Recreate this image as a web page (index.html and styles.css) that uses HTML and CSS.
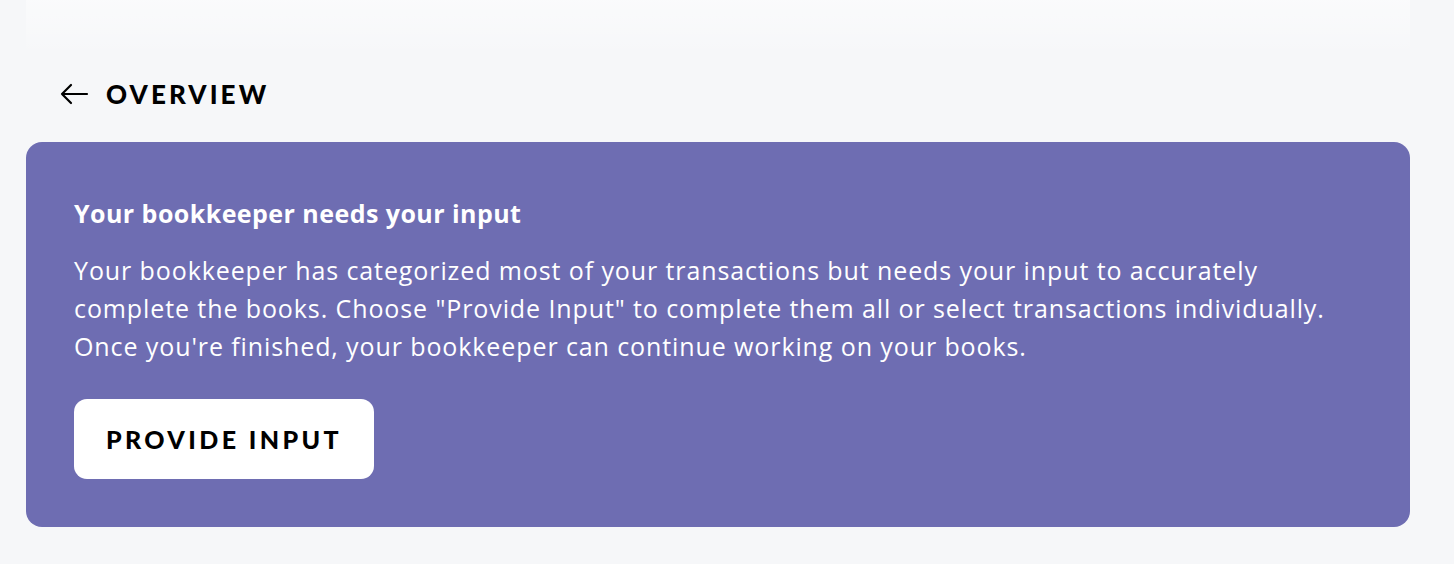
FILE: index.html
```html
<!DOCTYPE html>
<html lang="en">
<head>
<meta charset="utf-8">
<title>Bookkeeper input</title>
<link rel="stylesheet" href="styles.css">
</head>
<body>
<div class="topfade"></div>
<main class="page">
  <a class="back" href="#">
    <svg class="back-icon" width="30" height="22" viewBox="0 0 30 22" aria-hidden="true">
      <path d="M28 11H3M12 2L3 11l9 9" fill="none" stroke="#000" stroke-width="2.2" stroke-linecap="round" stroke-linejoin="round"/>
    </svg>
    <span class="back-label">OVERVIEW</span>
  </a>
  <section class="card">
    <h2 class="card-title">Your bookkeeper needs your input</h2>
    <p class="card-text">Your bookkeeper has categorized most of your transactions but needs your input to accurately<br>complete the books. Choose "Provide Input" to complete them all or select transactions individually.<br>Once you're finished, your bookkeeper can continue working on your books.</p>
    <button class="btn" type="button">PROVIDE INPUT</button>
  </section>
</main>
</body>
</html>
```

FILE: styles.css
```css
* { box-sizing: border-box; }
html, body { margin: 0; padding: 0; }
body {
  background: #f6f7f9;
  font-family: Lato, "Open Sans", sans-serif;
  color: #000;
  height: 564px;
  overflow: hidden;
  position: relative;
}
.topfade {
  position: absolute;
  left: 26px;
  right: 44px;
  top: 0;
  height: 55px;
  background: linear-gradient(to bottom, rgba(255,255,255,0.45), rgba(255,255,255,0.25) 50%, rgba(255,255,255,0));
}
.page {
  padding: 78px 44px 0 26px;
}
.back {
  display: flex;
  align-items: center;
  gap: 17px;
  padding-left: 33px;
  height: 32px;
  text-decoration: none;
  color: #000;
}
.back-icon { display: block; }
.back-label {
  font-size: 26px;
  font-weight: 900;
  letter-spacing: 3.1px;
  line-height: 32px;
}
.card {
  margin-top: 32px;
  background: #6e6db2;
  border-radius: 16px;
  padding: 56px 48px 48px;
  color: #fff;
  height: 385px;
  font-family: "Open Sans", Lato, sans-serif;
}
.card-title {
  margin: 0;
  font-size: 25px;
  font-weight: 700;
  line-height: 30px;
  letter-spacing: 0.45px;
}
.card-text {
  margin: 23px 0 0;
  font-size: 25px;
  font-weight: 400;
  line-height: 38px;
  letter-spacing: 0.9px;
}
.btn {
  margin-top: 34px;
  width: 300px;
  height: 80px;
  background: #fff;
  border: 0;
  border-radius: 13px;
  font-family: Lato, "Open Sans", sans-serif;
  font-size: 25px;
  font-weight: 900;
  letter-spacing: 3.4px;
  color: #000;
}
```
